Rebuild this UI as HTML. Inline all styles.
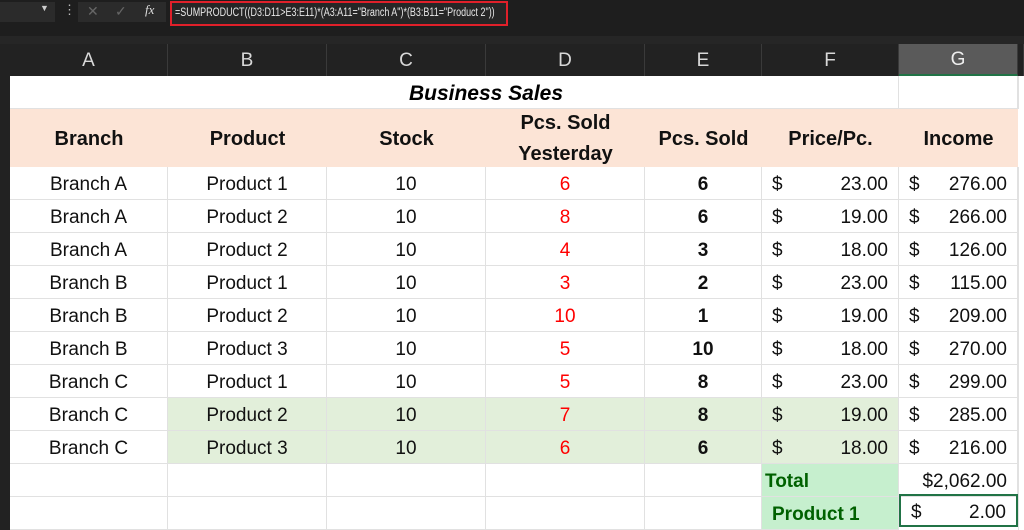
<!DOCTYPE html>
<html><head><meta charset="utf-8"><style>
*{margin:0;padding:0;box-sizing:border-box}
body{width:1024px;height:530px;overflow:hidden;background:#fff;position:relative;font-family:"Liberation Sans",sans-serif}
.a{position:absolute}
.c{position:absolute;display:flex;align-items:center;justify-content:center;font-size:19px;color:#111;border-right:1px solid #e1e1e1;border-bottom:1px solid #e1e1e1;white-space:nowrap;padding-top:4px}
.h{font-weight:bold;background:#fce4d6;border:none;font-size:20px;padding-top:2px}
.r{color:#f00}
.b{font-weight:bold}
.m{justify-content:space-between;padding:4px 10px 0 10px}
.g{background:#e2efda}
.gg{background:#c6efce;color:#006100;font-weight:bold;justify-content:flex-start}
.ch{position:absolute;top:44px;height:32px;display:flex;align-items:center;justify-content:center;color:#d8d8d8;font-size:19px;border-right:1px solid #3a3a3a;background:#222;padding-top:2px}
</style></head><body>
<div class="a" style="left:0;top:0;width:1024px;height:44px;background:#262626"></div>
<div class="a" style="left:0;top:0;width:1024px;height:36px;background:#1e1e1e"></div>
<div class="a" style="left:0;top:2px;width:55px;height:20px;background:#2b2b2b"></div>
<div class="a" style="left:40px;top:3px;color:#ccc;font-size:9px">▼</div>
<div class="a" style="left:63px;top:2px;color:#bbb;font-size:13px">⋮</div>
<div class="a" style="left:78px;top:2px;width:88px;height:20px;background:#2b2b2b"></div>
<div class="a" style="left:87px;top:3px;color:#666;font-size:14px">✕</div>
<div class="a" style="left:115px;top:3px;color:#666;font-size:14px">✓</div>
<div class="a" style="left:145px;top:2px;color:#ddd;font-size:13px;font-style:italic;font-family:'Liberation Serif',serif">fx</div>
<div class="a" style="left:170px;top:1px;width:338px;height:25px;border:2px solid #e0202a;background:#262626"></div>
<div class="a" style="left:175px;top:3px;color:#e8e8e8;font-size:11.5px;line-height:20px;white-space:nowrap;transform:scaleX(0.78);transform-origin:0 0">=SUMPRODUCT((D3:D11&gt;E3:E11)*(A3:A11="Branch A")*(B3:B11="Product 2"))</div>
<div class="a" style="left:0;top:44px;width:10px;height:486px;background:#222"></div>
<div class="ch" style="left:10px;width:158px">A</div>
<div class="ch" style="left:168px;width:159px">B</div>
<div class="ch" style="left:327px;width:159px">C</div>
<div class="ch" style="left:486px;width:159px">D</div>
<div class="ch" style="left:645px;width:117px">E</div>
<div class="ch" style="left:762px;width:137px">F</div>
<div class="ch" style="left:899px;width:119px;background:#5a5a5a;border-bottom:2px solid #217346;color:#eee">G</div>
<div class="ch" style="left:1018px;width:6px"></div>
<div id="g"></div>
<script>
var X=[10,168,327,486,645,762,899,1018];
var h='';
function cell(ci,y,hh,txt,cls,span){var x=X[ci],w=X[ci+(span||1)]-x;h+='<div class="c '+(cls||'')+'" style="left:'+x+'px;top:'+y+'px;width:'+w+'px;height:'+hh+'px">'+txt+'</div>';}
cell(0,76,33,'','',6);
h+='<div class="a" style="left:327px;top:76px;width:318px;height:33px;display:flex;align-items:center;justify-content:center;font-weight:bold;font-style:italic;font-size:21px;padding-top:2px">Business Sales</div>';
cell(6,76,33,'');cell(7,76,33,'');
var hd=['Branch','Product','Stock','<div style="text-align:center;line-height:31px">Pcs. Sold<br>Yesterday</div>','Pcs. Sold','Price/Pc.','Income'];
for(var i=0;i<7;i++)cell(i,109,58,hd[i],'h');
var d=[['Branch A','Product 1',6,6,'23.00','276.00'],['Branch A','Product 2',8,6,'19.00','266.00'],['Branch A','Product 2',4,3,'18.00','126.00'],['Branch B','Product 1',3,2,'23.00','115.00'],['Branch B','Product 2',10,1,'19.00','209.00'],['Branch B','Product 3',5,10,'18.00','270.00'],['Branch C','Product 1',5,8,'23.00','299.00'],['Branch C','Product 2',7,8,'19.00','285.00'],['Branch C','Product 3',6,6,'18.00','216.00']];
for(var r=0;r<9;r++){var y=167+r*33,q=d[r],g=r>=7?' g':'';
cell(0,y,33,q[0]);cell(1,y,33,q[1],g);cell(2,y,33,'10',g);cell(3,y,33,q[2],'r'+g);cell(4,y,33,q[3],'b'+g);
cell(5,y,33,'<span>$</span><span>'+q[4]+'</span>','m'+g);cell(6,y,33,'<span>$</span><span>'+q[5]+'</span>','m');cell(7,y,33,'');}
for(var r=0;r<2;r++){var y=464+r*33;for(var i=0;i<5;i++)cell(i,y,33,'');cell(7,y,33,'');}
h+='<div class="c gg" style="left:762px;top:464px;width:137px;height:33px;padding-left:3px">Total</div>';
h+='<div class="c gg" style="left:762px;top:497px;width:137px;height:33px;padding-left:10px">Product 1</div>';
h+='<div class="c" style="left:899px;top:464px;width:119px;height:33px;justify-content:flex-end;padding-right:10px">$2,062.00</div>';
h+='<div class="c m" style="left:899px;top:494px;width:119px;height:33px;border:2px solid #217346"><span>$</span><span>2.00</span></div>';
document.getElementById('g').innerHTML=h;
</script>
</body></html>
